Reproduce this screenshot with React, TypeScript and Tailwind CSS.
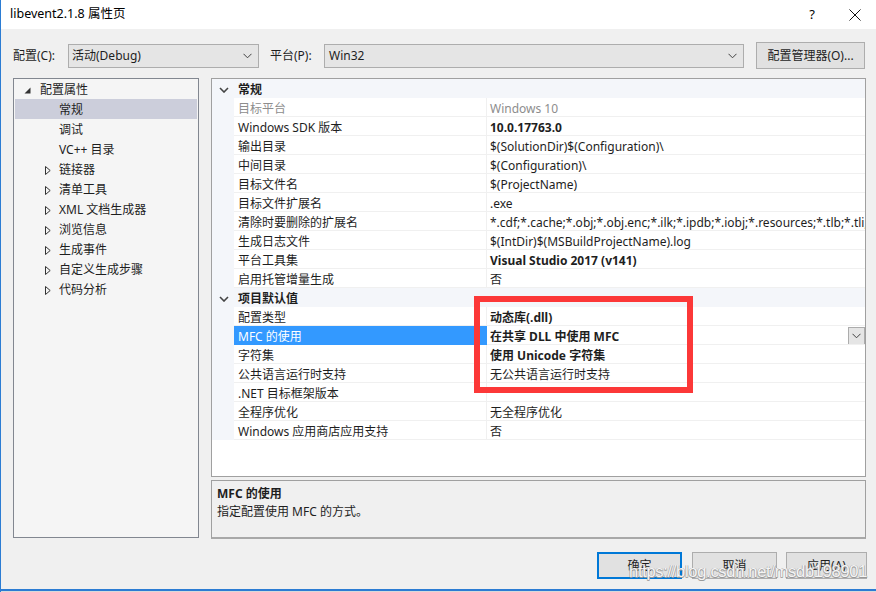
import React from "react";

type Row = { n: string; v: string; bold?: boolean; gray?: boolean; sel?: boolean };

const general: Row[] = [
  { n: "目标平台", v: "Windows 10", gray: true },
  { n: "Windows SDK 版本", v: "10.0.17763.0", bold: true },
  { n: "输出目录", v: "$(SolutionDir)$(Configuration)\\" },
  { n: "中间目录", v: "$(Configuration)\\" },
  { n: "目标文件名", v: "$(ProjectName)" },
  { n: "目标文件扩展名", v: ".exe" },
  {
    n: "清除时要删除的扩展名",
    v: "*.cdf;*.cache;*.obj;*.obj.enc;*.ilk;*.ipdb;*.iobj;*.resources;*.tlb;*.tli;*.tlh;*.tmp;*.rsp;*.pgc;*.pgd;*.meta;*.tlog;*.manifest;*.res;*.pch;*.exp",
  },
  { n: "生成日志文件", v: "$(IntDir)$(MSBuildProjectName).log" },
  { n: "平台工具集", v: "Visual Studio 2017 (v141)", bold: true },
  { n: "启用托管增量生成", v: "否" },
];

const defaults: Row[] = [
  { n: "配置类型", v: "动态库(.dll)", bold: true },
  { n: "MFC 的使用", v: "在共享 DLL 中使用 MFC", bold: true, sel: true },
  { n: "字符集", v: "使用 Unicode 字符集", bold: true },
  { n: "公共语言运行时支持", v: "无公共语言运行时支持" },
  { n: ".NET 目标框架版本", v: "" },
  { n: "全程序优化", v: "无全程序优化" },
  { n: "Windows 应用商店应用支持", v: "否" },
];

const tree: { t: string; exp?: boolean; sel?: boolean }[] = [
  { t: "常规", sel: true },
  { t: "调试" },
  { t: "VC++ 目录" },
  { t: "链接器", exp: true },
  { t: "清单工具", exp: true },
  { t: "XML 文档生成器", exp: true },
  { t: "浏览信息", exp: true },
  { t: "生成事件", exp: true },
  { t: "自定义生成步骤", exp: true },
  { t: "代码分析", exp: true },
];

function Chevron({ className = "" }: { className?: string }) {
  return (
    <svg width="9" height="6" viewBox="0 0 9 6" className={className}>
      <path d="M0.5 0.8 L4.5 4.8 L8.5 0.8" fill="none" stroke="#404040" strokeWidth="1" />
    </svg>
  );
}

function GridChevron() {
  return (
    <svg width="10" height="6" viewBox="0 0 10 6">
      <path d="M1 1 L5 5 L9 1" fill="none" stroke="#444" strokeWidth="1.6" />
    </svg>
  );
}

function Category({ title }: { title: string }) {
  return (
    <div className="flex h-[19px] items-center bg-[#f4f6fa] pt-[2px]">
      <div className="flex w-[22px] justify-center pl-[1px]">
        <GridChevron />
      </div>
      <span className="pl-[4px] font-bold text-[#1e1e1e]">{title}</span>
    </div>
  );
}

function PropRow({ r }: { r: Row }) {
  return (
    <div className="flex h-[19px]">
      <div className="w-[22px] shrink-0 bg-[#f4f6fa]" />
      <div
        className={
          r.sel
            ? "flex w-[253px] shrink-0 items-center border-b border-[#3399ff] bg-[#3399ff] pl-[4px] pt-[4px] text-white"
            : r.gray
            ? "flex w-[253px] shrink-0 items-center border-b border-r border-[#f0f0f0] pl-[4px] pt-[4px] text-[#8d8d8d]"
            : "flex w-[253px] shrink-0 items-center border-b border-r border-[#f0f0f0] pl-[4px] pt-[4px] text-[#1e1e1e]"
        }
      >
        {r.n}
      </div>
      <div className="relative flex min-w-0 flex-1 items-center overflow-hidden whitespace-nowrap border-b border-[#f0f0f0] pl-[3px] pt-[4px]">
        <span
          className={
            r.bold
              ? "font-bold text-[#1e1e1e]"
              : r.gray
              ? "text-[#8d8d8d]"
              : "text-[#1e1e1e]"
          }
        >
          {r.v}
        </span>
        {r.sel && (
          <div className="absolute right-0 top-[1px] flex h-[18px] w-[17px] items-center justify-center border border-[#acacac] bg-[#e5e5e5]">
            <Chevron />
          </div>
        )}
      </div>
    </div>
  );
}

export default function App() {
  return (
    <div
      className="relative h-[592px] w-[876px] overflow-hidden border-l border-[#2b7cd3] bg-[#f0f0f0] text-[12px] leading-none text-[#1e1e1e]"
      style={{ fontFamily: "'Noto Sans', 'Noto Sans CJK SC', sans-serif" }}
    >
      {/* Title bar */}
      <div className="flex h-[29px] items-center bg-white pl-[9px]">
        <span className="text-[12.5px] text-black">libevent2.1.8 属性页</span>
        <div className="ml-auto flex items-center">
          <span className="mr-[34px] text-[13px] text-black">?</span>
          <svg width="12" height="12" viewBox="0 0 12 12" className="mr-[15px]">
            <path d="M0.5 0.5 L11.5 11.5 M11.5 0.5 L0.5 11.5" stroke="#111" strokeWidth="1" />
          </svg>
        </div>
      </div>

      {/* Config row */}
      <div className="mt-[13px] flex h-[27px] items-center pl-[12px]">
        <span className="w-[55px]">配置(C):</span>
        <div className="flex h-[24px] w-[191px] items-center justify-between border border-[#adadad] bg-[#e5e5e5] pl-[3px] pr-[6px]">
          <span>活动(Debug)</span>
          <Chevron />
        </div>
        <span className="ml-[11px] w-[54px]">平台(P):</span>
        <div className="flex h-[24px] w-[420px] items-center justify-between border border-[#adadad] bg-[#e5e5e5] pl-[4px] pr-[6px]">
          <span>Win32</span>
          <Chevron />
        </div>
        <div className="ml-[12px] flex h-[27px] w-[109px] items-center justify-center border border-[#adadad] bg-[#e1e1e1]">
          配置管理器(O)...
        </div>
      </div>

      {/* Main */}
      <div className="mt-[9px] flex pl-[12px]">
        {/* Tree */}
        <div className="h-[460px] w-[186px] border border-[#828790] bg-[#f5f5f5] pl-[1px] pr-[1px]">
          <div className="flex h-[20px] items-center pt-[2px]">
            <svg width="7" height="7" viewBox="0 0 7 7" className="ml-[9px]">
              <path d="M6.5 0.5 L6.5 6.5 L0.5 6.5 Z" fill="#333" />
            </svg>
            <span className="ml-[9px]">配置属性</span>
          </div>
          {tree.map((it) => (
            <div
              key={it.t}
              className={
                it.sel
                  ? "flex h-[20px] items-center bg-[#cccedb] pt-[2px]"
                  : "flex h-[20px] items-center pt-[2px]"
              }
            >
              <div className="flex w-[43px] justify-end pr-[7px]">
                {it.exp && (
                  <svg width="6" height="9" viewBox="0 0 6 9">
                    <path d="M0.5 0.5 L5.2 4.5 L0.5 8.5 Z" fill="none" stroke="#333" strokeWidth="1" />
                  </svg>
                )}
              </div>
              <span className="ml-[1px]">{it.t}</span>
            </div>
          ))}
        </div>

        {/* Right column */}
        <div className="ml-[12px] flex w-[655px] flex-col">
          <div className="h-[399px] border border-[#a0a0a0] bg-white">
            <Category title="常规" />
            {general.map((r) => (
              <PropRow key={r.n} r={r} />
            ))}
            <Category title="项目默认值" />
            {defaults.map((r) => (
              <PropRow key={r.n} r={r} />
            ))}
          </div>
          <div className="mt-[3px] h-[59px] border border-[#a0a0a0] border-b-2 border-b-[#a8a8a8] bg-[#f0f0f0] pl-[5px] pt-[7px]">
            <div className="font-bold">MFC 的使用</div>
            <div className="mt-[6px]">指定配置使用 MFC 的方式。</div>
          </div>
        </div>
      </div>

      {/* Buttons */}
      <div className="mt-[13px] flex justify-end pr-[9px]">
        <div className="flex h-[27px] w-[85px] items-center justify-center border-2 border-[#0078d7] bg-[#e1e1e1]">
          确定
        </div>
        <div className="ml-[10px] flex h-[27px] w-[85px] items-center justify-center border border-[#adadad] bg-[#e1e1e1]">
          取消
        </div>
        <div className="ml-[9px] flex h-[27px] w-[81px] items-center justify-center border border-[#adadad] bg-[#e1e1e1]">
          应用(A)
        </div>
      </div>

      {/* bottom blue border */}
      <div className="absolute bottom-0 left-0 right-0 h-[3px] border-t-2 border-[#2b7cd3] bg-[#d9d9d9]" />

      {/* red annotation */}
      <div className="pointer-events-none absolute left-[473px] top-[296px] h-[97px] w-[219px] border-[6px] border-[#fc3838]" />

      {/* watermark */}
      <div
        className="pointer-events-none absolute left-[628px] top-[563px] whitespace-nowrap text-[16.5px] tracking-[-0.3px] text-white/90"
        style={{
          fontFamily: "'Liberation Sans', sans-serif",
          textShadow:
            "0.5px 0.5px 0 rgba(150,150,150,0.8), -0.5px -0.5px 0 rgba(150,150,150,0.8), 0.5px -0.5px 0 rgba(150,150,150,0.8), -0.5px 0.5px 0 rgba(150,150,150,0.8)",
        }}
      >
        https://blog.csdn.net/msdb198901
      </div>
    </div>
  );
}
